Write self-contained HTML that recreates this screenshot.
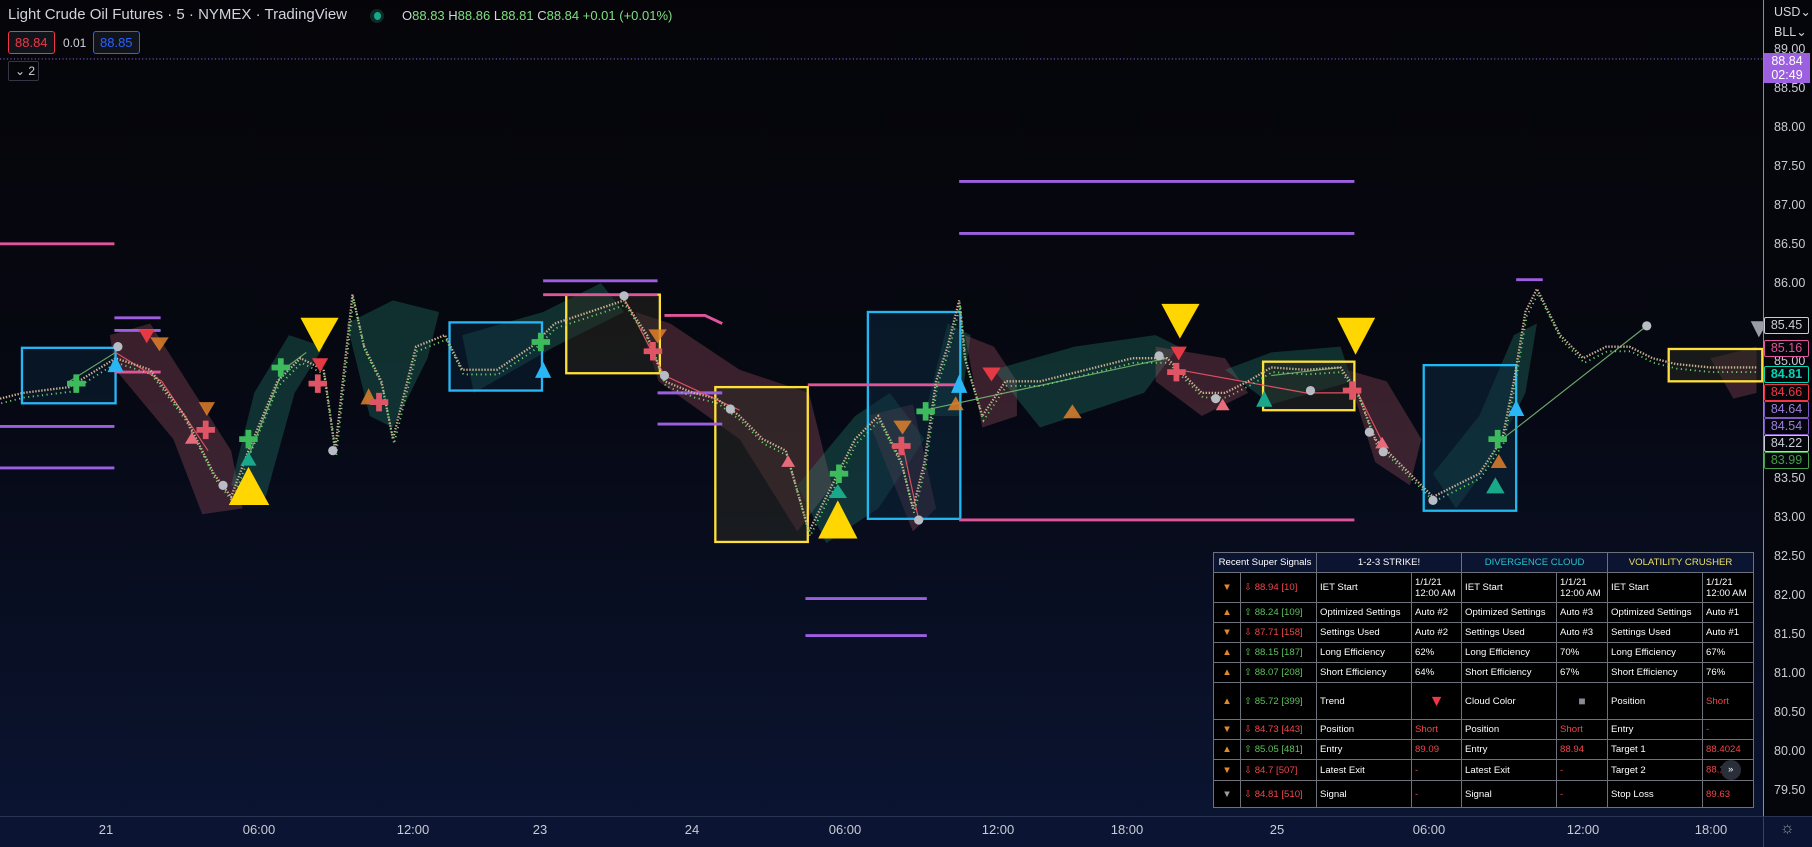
<!DOCTYPE html>
<html><head><meta charset="utf-8">
<style>
*{margin:0;padding:0;box-sizing:border-box}
body{width:1812px;height:847px;overflow:hidden;background:linear-gradient(#050509 0%,#060812 45%,#0b1533 100%);font-family:"Liberation Sans",sans-serif;position:relative;color:#d1d4dc}
.abs{position:absolute}
#chart{position:absolute;left:0;top:0}
.title{left:8px;top:6px;font-size:15px;color:#d1d4dc;white-space:nowrap}
.ohlc{left:402px;top:8px;font-size:13px;color:#7ee07e;white-space:nowrap}
.ohlc b{color:#d1d4dc;font-weight:normal}
.pb{top:31px;height:23px;font-size:13px;line-height:21px;padding:0 6px;border:1px solid;border-radius:3px;background:#12141c}
.axis{left:1763px;top:0;width:49px;height:816px;border-left:1px solid #8a8e99;background:#05060b}
.pl{position:absolute;left:1764px;width:45px;height:17px;font-size:12.5px;line-height:15px;text-align:center;border:1px solid;border-radius:2px;background:#05060b}
.pt{position:absolute;left:1774px;font-size:12.5px;color:#c9ccd4}
.tbar{left:0;top:816px;width:1812px;height:31px;background:#0b1533;border-top:1px solid #2a3350}
.tl{position:absolute;top:822px;font-size:13px;color:#c9ccd4;transform:translateX(-50%)}
table{position:absolute;left:1213px;top:552px;width:540px;table-layout:fixed;border-collapse:collapse;font-size:9.6px;color:#fff;background:#000;border:1.5px solid #b0b4c0}
td{border:1px solid #6d717c;padding:0 3px;white-space:nowrap;line-height:11px;overflow:hidden}
.r{color:#f0464a}.g{color:#5cc05c}.o{color:#e08a2a;text-align:center}
thead td{background:#0b1430;text-align:center;height:20px}
</style></head><body>
<svg id="chart" width="1812" height="847" viewBox="0 0 1568 733" preserveAspectRatio="none">
<g fill-opacity="0.28">
<polygon fill="#c06070" points="95,290 130,280 200,390 210,440 175,445 150,380 100,320"/>
<polygon fill="#2a9a80" points="200,420 220,340 250,290 280,300 255,340 230,430"/>
<polygon fill="#2a9a80" points="300,280 340,260 380,270 370,310 340,370 320,360"/>
<polygon fill="#2a9a80" points="400,290 470,270 520,245 540,270 480,300 410,340"/>
<polygon fill="#c06070" points="550,270 580,280 640,320 700,340 720,420 690,460 640,380 570,330"/>
<polygon fill="#2a9a80" points="690,420 740,360 770,340 800,380 760,440 715,470"/>
<polygon fill="#c06070" points="750,360 790,350 810,440 790,460"/>
<polygon fill="#2a9a80" points="800,360 820,280 840,290 830,360"/>
<polygon fill="#c06070" points="835,290 860,300 880,330 880,360 850,370"/>
<polygon fill="#2a9a80" points="860,320 930,300 1000,290 1020,300 990,340 900,370"/>
<polygon fill="#c06070" points="1000,300 1060,310 1080,340 1040,360 1000,330"/>
<polygon fill="#2a9a80" points="1060,320 1100,305 1160,300 1170,330 1100,350"/>
<polygon fill="#c06070" points="1165,320 1200,330 1230,380 1220,420 1190,400"/>
<polygon fill="#2a9a80" points="1240,410 1280,360 1310,290 1330,280 1320,340 1290,400 1260,440"/>
<polygon fill="#c06070" points="1480,310 1520,300 1520,340 1500,345"/>
</g>
<g fill="none" stroke-width="2">
<rect x="19" y="301" width="81" height="48" stroke="#29b6f6" fill="#0c2a40" fill-opacity="0.4"/>
<rect x="389" y="279" width="80" height="59" stroke="#29b6f6" fill="#0c2a40" fill-opacity="0.4"/>
<rect x="490" y="255" width="81" height="68" stroke="#ffe03a" fill="#2a2a22" fill-opacity="0.5"/>
<rect x="619" y="335" width="80" height="134" stroke="#ffe03a" fill="#2a2a22" fill-opacity="0.5"/>
<rect x="751" y="270" width="80" height="179" stroke="#1fb8f0" fill="#0c2a40" fill-opacity="0.5"/>
<rect x="1093" y="313" width="79" height="42" stroke="#ffe03a" fill="#2a2a22" fill-opacity="0.5"/>
<rect x="1232" y="316" width="80" height="126" stroke="#1fb8f0" fill="#0c2a40" fill-opacity="0.5"/>
<rect x="1444" y="302" width="81" height="28" stroke="#ffe03a" fill="#2a2a22" fill-opacity="0.5"/>
</g>
<g stroke-width="2.5" fill="none">
<path stroke="#e0559a" d="M0 211H99 M99 322H139 M470 255H569 M575 273H610 L625 280 M699 333H830 M830 450H1172"/>
<path stroke="#9c5fe0" d="M0 369H99 M0 405H99 M99 275H139 M99 286H139 M470 243H569 M569 340H625 M569 367H625 M830 157H1172 M830 202H1172 M697 518H802 M697 550H802 M1312 242H1335"/>
</g>
<path stroke="#6ba76a" stroke-width="1" fill="none" d="M60 330 L100 305 M215 395 L245 320 L265 305 M800 355 L1010 310 M1100 325 L1160 318 M1300 380 L1425 282"/>
<path stroke="#e05060" stroke-width="1" fill="none" d="M100 305 L140 330 L180 390 M540 258 L575 325 M575 325 L640 355 M1020 320 L1130 340 L1175 340 L1200 390 M780 380 L795 450"/>
<polyline fill="none" stroke="#c9b090" stroke-width="2" stroke-dasharray="1.2 1.4" points="0,345 20,340 60,335 100,310 130,320 160,360 185,410 200,430 215,390 240,330 260,310 280,320 290,390 300,300 305,255 315,300 330,330 340,380 360,300 385,290 400,320 430,320 460,300 480,280 510,270 540,260 560,290 575,330 600,340 620,345 640,360 660,380 680,390 700,460 715,430 740,380 760,360 780,400 790,440 800,400 810,330 820,300 830,260 835,310 850,360 870,330 900,330 940,320 980,310 1010,310 1020,320 1040,340 1060,340 1080,330 1100,318 1130,320 1160,318 1175,340 1190,380 1210,400 1230,420 1240,430 1260,420 1280,410 1300,380 1310,330 1320,270 1330,250 1350,290 1370,310 1390,300 1410,300 1430,310 1450,315 1480,318 1520,318"/>
<polyline fill="none" stroke="#6fd36f" stroke-width="1.6" stroke-dasharray="1 3" transform="translate(1,4)" points="0,345 20,340 60,335 100,310 130,320 160,360 185,410 200,430 215,390 240,330 260,310 280,320 290,390 300,300 305,255 315,300 330,330 340,380 360,300 385,290 400,320 430,320 460,300 480,280 510,270 540,260 560,290 575,330 600,340 620,345 640,360 660,380 680,390 700,460 715,430 740,380 760,360 780,400 790,440 800,400 810,330 820,300 830,260 835,310 850,360 870,330 900,330 940,320 980,310 1010,310 1020,320 1040,340 1060,340 1080,330 1100,318 1130,320 1160,318 1175,340 1190,380 1210,400 1230,420 1240,430 1260,420 1280,410 1300,380 1310,330 1320,270 1330,250 1350,290 1370,310 1390,300 1410,300 1430,310 1450,315 1480,318 1520,318"/>
<g fill="#ffd600">
<polygon points="198,437 215,404 233,437"/>
<polygon points="708,466 725,433 742,466"/>
<polygon points="260,275 293,275 276,305"/>
<polygon points="1005,263 1038,263 1021,293"/>
<polygon points="1157,275 1190,275 1173,307"/>
</g>
<g fill="#29b6f6"><polygon points="93,322 100,308 107,322"/><polygon points="463,327 470,313 477,327"/><polygon points="823,340 830,324 837,340"/><polygon points="1305,360 1312,346 1319,360"/></g>
<g fill="#e0802a" fill-opacity="0.85"><polygon points="312,350 319,336 326,350"/><polygon points="920,362 928,350 936,362"/><polygon points="820,355 827,343 834,355"/><polygon points="1290,405 1297,393 1304,405"/><polygon points="172,348 186,348 179,360"/><polygon points="130,292 146,292 138,304"/><polygon points="561,285 577,285 569,297"/><polygon points="773,364 789,364 781,376"/></g>
<g fill="#e63946"><polygon points="270,310 284,310 277,322"/><polygon points="1013,300 1027,300 1020,312"/><polygon points="850,318 866,318 858,330"/><polygon points="120,285 134,285 127,297"/></g>
<g fill="#1aa88a"><polygon points="1087,352 1094,338 1101,352"/><polygon points="1286,427 1294,413 1302,427"/><polygon points="717,431 725,419 733,431"/><polygon points="208,403 215,391 222,403"/></g>
<g fill="#e86b7c"><polygon points="160,384 166,374 172,384"/><polygon points="676,404 682,394 688,404"/><polygon points="1052,355 1058,345 1064,355"/><polygon points="1190,388 1196,378 1202,388"/></g>
<g stroke="#3cba5c" stroke-width="5"><path d="M66 324v16M58 332h16 M215 372v16M207 380h16 M243 310v16M235 318h16 M726 402v16M718 410h16 M801 348v16M793 356h16 M1296 372v16M1288 380h16 M468 288v16M460 296h16"/></g>
<g stroke="#e05565" stroke-width="5"><path d="M178 364v16M170 372h16 M275 324v16M267 332h16 M328 340v16M320 348h16 M565 296v16M557 304h16 M780 378v16M772 386h16 M1018 314v16M1010 322h16 M1170 330v16M1162 338h16"/></g>
<g fill="#b8bcc4"><circle cx="102" cy="300" r="4"/><circle cx="288" cy="390" r="4"/><circle cx="540" cy="256" r="4"/><circle cx="575" cy="325" r="4"/><circle cx="795" cy="450" r="4"/><circle cx="1003" cy="308" r="4"/><circle cx="1052" cy="345" r="4"/><circle cx="1134" cy="338" r="4"/><circle cx="1185" cy="374" r="4"/><circle cx="1425" cy="282" r="4"/><circle cx="193" cy="420" r="4"/><circle cx="632" cy="354" r="4"/><circle cx="1240" cy="433" r="4"/><circle cx="1197" cy="391" r="4"/></g>
<polygon fill="#9a9ca4" points="1515,278 1530,278 1522,292"/>
<path d="M0 51H1525" stroke="#7e57c2" stroke-width="1" stroke-dasharray="1 2"/>
</svg>

<div class="abs title">Light Crude Oil Futures · 5 · NYMEX · TradingView</div>
<div class="abs" style="left:370px;top:9px;width:14px;height:14px;border-radius:50%;background:#0e2a26"><div style="margin:3px auto;width:7px;height:8px;border-radius:50%;background:#1aa88a"></div></div>
<div class="abs ohlc"><b>O</b>88.83 <b>H</b>88.86 <b>L</b>88.81 <b>C</b>88.84 +0.01 (+0.01%)</div>
<div class="abs pb" style="left:8px;color:#f23645;border-color:#f23645">88.84</div>
<div class="abs" style="left:63px;top:36px;font-size:12px;color:#d1d4dc">0.01</div>
<div class="abs pb" style="left:93px;color:#2962ff;border-color:#2962ff">88.85</div>
<div class="abs" style="left:8px;top:61px;width:31px;height:20px;border:1px solid #333744;border-radius:2px;font-size:12px;line-height:18px;padding-left:6px;color:#d1d4dc">⌄ 2</div>

<div class="abs axis"></div>
<div class="pt" style="top:4px;color:#d1d4dc">USD⌄</div>
<div class="pt" style="top:24px;color:#d1d4dc">BLL⌄</div>
<div class="pt" style="top:42px">89.00</div>
<div class="pt" style="top:81px">88.50</div>
<div class="pt" style="top:120px">88.00</div>
<div class="pt" style="top:159px">87.50</div>
<div class="pt" style="top:198px">87.00</div>
<div class="pt" style="top:237px">86.50</div>
<div class="pt" style="top:276px">86.00</div>
<div class="pt" style="top:354px">85.00</div>
<div class="pt" style="top:471px">83.50</div>
<div class="pt" style="top:510px">83.00</div>
<div class="pt" style="top:549px">82.50</div>
<div class="pt" style="top:588px">82.00</div>
<div class="pt" style="top:627px">81.50</div>
<div class="pt" style="top:666px">81.00</div>
<div class="pt" style="top:705px">80.50</div>
<div class="pt" style="top:744px">80.00</div>
<div class="pt" style="top:783px">79.50</div>
<div class="abs" style="left:1764px;top:53px;width:46px;height:30px;background:#9c5fe0;color:#fff;font-size:12.5px;line-height:14px;text-align:center;padding-top:1px">88.84<br>02:49</div>
<div class="pl" style="top:317px;border-color:#c9ccd4;color:#c9ccd4">85.45</div>
<div class="pl" style="top:340px;border-color:#e0559a;color:#e0559a">85.16</div>
<div class="pl" style="top:366px;border-color:#00d6b4;color:#00d6b4;font-weight:bold">84.81</div>
<div class="pl" style="top:384px;border-color:#f23645;color:#f23645">84.66</div>
<div class="pl" style="top:401px;border-color:#7e57c2;color:#9c7fe0">84.64</div>
<div class="pl" style="top:418px;border-color:#7e57c2;color:#9c7fe0">84.54</div>
<div class="pl" style="top:435px;border-color:#c9ccd4;color:#c9ccd4">84.22</div>
<div class="pl" style="top:452px;border-color:#43a047;color:#43a047">83.99</div>

<div class="abs tbar"></div>
<div class="abs" style="left:1763px;top:816px;width:1px;height:31px;background:#3a4260"></div>
<div class="tl" style="left:106px">21</div>
<div class="tl" style="left:259px">06:00</div>
<div class="tl" style="left:413px">12:00</div>
<div class="tl" style="left:540px">23</div>
<div class="tl" style="left:692px">24</div>
<div class="tl" style="left:845px">06:00</div>
<div class="tl" style="left:998px">12:00</div>
<div class="tl" style="left:1127px">18:00</div>
<div class="tl" style="left:1277px">25</div>
<div class="tl" style="left:1429px">06:00</div>
<div class="tl" style="left:1583px">12:00</div>
<div class="tl" style="left:1711px">18:00</div>
<div class="abs" style="left:1780px;top:820px;font-size:16px;color:#8a8e99">☼</div>

<table>
<colgroup><col style="width:27px"><col style="width:76px"><col style="width:95px"><col style="width:50px"><col style="width:95px"><col style="width:51px"><col style="width:95px"><col style="width:51px"></colgroup>
<thead><tr><td colspan="2">Recent Super Signals</td><td colspan="2">1-2-3 STRIKE!</td><td colspan="2" style="color:#22c5d0">DIVERGENCE CLOUD</td><td colspan="2" style="color:#f0e060">VOLATILITY CRUSHER</td></tr></thead>
<tr style="height:30px"><td class="o">▼</td><td class="r">⇩ 88.94 [10]</td><td>IET Start</td><td>1/1/21<br>12:00 AM</td><td>IET Start</td><td>1/1/21<br>12:00 AM</td><td>IET Start</td><td>1/1/21<br>12:00 AM</td></tr>
<tr style="height:20px"><td class="o">▲</td><td class="g">⇧ 88.24 [109]</td><td>Optimized Settings</td><td>Auto #2</td><td>Optimized Settings</td><td>Auto #3</td><td>Optimized Settings</td><td>Auto #1</td></tr>
<tr style="height:20px"><td class="o">▼</td><td class="r">⇩ 87.71 [158]</td><td>Settings Used</td><td>Auto #2</td><td>Settings Used</td><td>Auto #3</td><td>Settings Used</td><td>Auto #1</td></tr>
<tr style="height:20px"><td class="o">▲</td><td class="g">⇧ 88.15 [187]</td><td>Long Efficiency</td><td>62%</td><td>Long Efficiency</td><td>70%</td><td>Long Efficiency</td><td>67%</td></tr>
<tr style="height:20px"><td class="o">▲</td><td class="g">⇧ 88.07 [208]</td><td>Short Efficiency</td><td>64%</td><td>Short Efficiency</td><td>67%</td><td>Short Efficiency</td><td>76%</td></tr>
<tr style="height:37px"><td class="o">▲</td><td class="g">⇧ 85.72 [399]</td><td>Trend</td><td style="color:#f23645;font-size:16px;text-align:center">▼</td><td>Cloud Color</td><td style="color:#888a94;text-align:center;font-size:12px">■</td><td>Position</td><td class="r">Short</td></tr>
<tr style="height:20px"><td class="o">▼</td><td class="r">⇩ 84.73 [443]</td><td>Position</td><td class="r">Short</td><td>Position</td><td class="r">Short</td><td>Entry</td><td class="r">-</td></tr>
<tr style="height:20px"><td class="o">▲</td><td class="g">⇧ 85.05 [481]</td><td>Entry</td><td class="r">89.09</td><td>Entry</td><td class="r">88.94</td><td>Target 1</td><td class="r">88.4024</td></tr>
<tr style="height:20px"><td class="o">▼</td><td class="r">⇩ 84.7 [507]</td><td>Latest Exit</td><td class="r">-</td><td>Latest Exit</td><td class="r">-</td><td>Target 2</td><td class="r">88.1<span style="display:inline-block;width:20px;height:20px;border-radius:50%;background:#2a2e39;color:#fff;text-align:center;line-height:19px;margin-left:-4px;vertical-align:middle">»</span></td></tr>
<tr style="height:27px"><td class="o" style="color:#9a9ca4">▼</td><td class="r">⇩ 84.81 [510]</td><td>Signal</td><td class="r">-</td><td>Signal</td><td class="r">-</td><td>Stop Loss</td><td class="r">89.63</td></tr>
</table>
</body></html>
